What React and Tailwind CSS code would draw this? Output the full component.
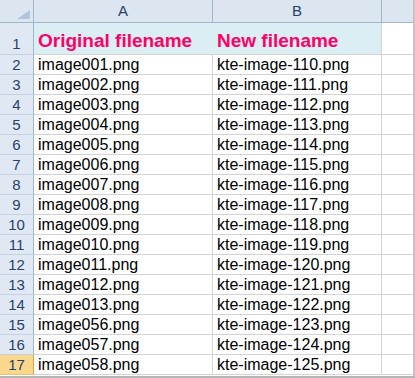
import React from "react";

const rows = [
  ["image001.png", "kte-image-110.png"],
  ["image002.png", "kte-image-111.png"],
  ["image003.png", "kte-image-112.png"],
  ["image004.png", "kte-image-113.png"],
  ["image005.png", "kte-image-114.png"],
  ["image006.png", "kte-image-115.png"],
  ["image007.png", "kte-image-116.png"],
  ["image008.png", "kte-image-117.png"],
  ["image009.png", "kte-image-118.png"],
  ["image010.png", "kte-image-119.png"],
  ["image011.png", "kte-image-120.png"],
  ["image012.png", "kte-image-121.png"],
  ["image013.png", "kte-image-122.png"],
  ["image056.png", "kte-image-123.png"],
  ["image057.png", "kte-image-124.png"],
  ["image058.png", "kte-image-125.png"],
];

const font = { fontFamily: '"Liberation Sans", Arial, sans-serif' };

export default function App() {
  return (
    <div className="w-[415px] h-[378px] bg-white overflow-hidden" style={font}>
      <div className="flex">
        <div className="w-[413px]">
          {/* column headers */}
          <div className="flex h-[23px] bg-[#dce6f1] border-b border-[#9eb6ce] text-[15px] text-[#27416a]">
            <div className="w-[34px] border-r border-[#9eb6ce] relative">
              <svg className="absolute left-[17px] top-[10px]" width="13" height="9" viewBox="0 0 13 9">
                <polygon points="13,0 13,9 0,9" fill="#b2c3da" />
              </svg>
            </div>
            <div className="w-[179px] border-r border-[#9eb6ce] flex items-center justify-center leading-[22px]">A</div>
            <div className="w-[169px] border-r border-[#9eb6ce] flex items-center justify-center leading-[22px]">B</div>
            <div className="w-[31px]"></div>
          </div>
          {/* row 1 */}
          <div className="flex h-[32px]">
            <div className="w-[34px] bg-[#dfe8f3] border-r border-b border-r-[#9eb6ce] border-b-[#c3d1e2] flex items-end justify-center text-[15px] text-[#27416a] leading-[18px] pb-[1px]">1</div>
            <div className="w-[179px] bg-[#daeef3] border-b border-[#d4d4d4] flex items-end pl-[4px] pb-[2px] text-[19px] leading-[22px] font-bold text-[#ff0066] whitespace-nowrap">Original filename</div>
            <div className="w-[169px] bg-[#daeef3] border-r border-b border-[#d4d4d4] flex items-end pl-[4px] pb-[2px] text-[19px] leading-[22px] font-bold text-[#ff0066] whitespace-nowrap">New filename</div>
            <div className="w-[31px] border-b border-[#d4d4d4]"></div>
          </div>
          {rows.map((r, i) => {
            const n = i + 2;
            const sel = n === 17;
            return (
              <div key={n} className="flex h-[20px]">
                <div
                  className={
                    sel
                      ? "w-[34px] bg-[#f9d78c] border-r border-b border-r-[#e5a33c] border-b-[#f0c070] flex items-center justify-center text-[15px] text-[#27416a] leading-[19px]"
                      : "w-[34px] bg-[#dfe8f3] border-r border-b border-r-[#9eb6ce] border-b-[#c3d1e2] flex items-center justify-center text-[15px] text-[#27416a] leading-[19px]"
                  }
                >
                  {n}
                </div>
                <div className="w-[179px] border-r border-b border-[#d4d4d4] pl-[4px] text-[16px] leading-[19px] text-black whitespace-nowrap">{r[0]}</div>
                <div className="w-[169px] border-r border-b border-[#d4d4d4] pl-[4px] text-[16px] leading-[19px] text-black whitespace-nowrap">{r[1]}</div>
                <div className="w-[31px] border-b border-[#d4d4d4]"></div>
              </div>
            );
          })}
          <div className="h-[1px] bg-white"></div>
        </div>
        <div className="w-[2px] bg-[#c4c4c4]"></div>
      </div>
      <div className="h-[3px] bg-[#b4b4b4]"></div>
    </div>
  );
}
